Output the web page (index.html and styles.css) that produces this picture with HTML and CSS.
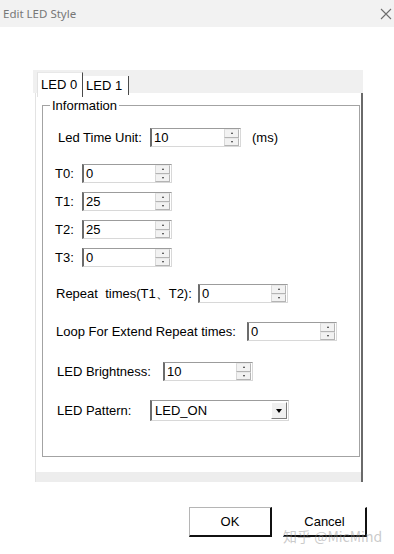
FILE: index.html
```html
<!DOCTYPE html>
<html lang="en">
<head>
    <meta charset="UTF-8">
    <meta name="viewport" content="width=device-width, initial-scale=1.0">
    <title>Edit LED Style</title>
    <link rel="stylesheet" href="styles.css">
</head>
<body>
    <div class="dialog">
        <div class="titlebar">
            <span class="title">Edit LED Style</span>
            <svg class="close" width="12" height="12" viewBox="0 0 12 12">
                <path d="M1 1 L11 11 M11 1 L1 11" stroke="#6e6e6e" stroke-width="1.1" fill="none"/>
            </svg>
        </div>

        <div class="content">
            <div class="tabstrip">
                <div class="tab active">LED 0</div>
                <div class="tab">LED 1</div>
            </div>
            <div class="panel">
                <fieldset class="group">
                    <legend>Information</legend>

                    <div class="row unit">
                        <span class="label">Led Time Unit:</span>
                        <div class="spin"><span class="val">10</span><span class="arrows"><i class="up"></i><i class="down"></i></span></div>
                        <span class="suffix">(ms)</span>
                    </div>

                    <div class="row t first">
                        <span class="label">T0:</span>
                        <div class="spin"><span class="val">0</span><span class="arrows"><i class="up"></i><i class="down"></i></span></div>
                    </div>
                    <div class="row t">
                        <span class="label">T1:</span>
                        <div class="spin"><span class="val">25</span><span class="arrows"><i class="up"></i><i class="down"></i></span></div>
                    </div>
                    <div class="row t">
                        <span class="label">T2:</span>
                        <div class="spin"><span class="val">25</span><span class="arrows"><i class="up"></i><i class="down"></i></span></div>
                    </div>
                    <div class="row t">
                        <span class="label">T3:</span>
                        <div class="spin"><span class="val">0</span><span class="arrows"><i class="up"></i><i class="down"></i></span></div>
                    </div>

                    <div class="row repeat">
                        <span class="label">Repeat&nbsp; times(T1、T2):</span>
                        <div class="spin"><span class="val">0</span><span class="arrows"><i class="up"></i><i class="down"></i></span></div>
                    </div>

                    <div class="row loop">
                        <span class="label">Loop For Extend Repeat times:</span>
                        <div class="spin"><span class="val">0</span><span class="arrows"><i class="up"></i><i class="down"></i></span></div>
                    </div>

                    <div class="row bright">
                        <span class="label">LED Brightness:</span>
                        <div class="spin"><span class="val">10</span><span class="arrows"><i class="up"></i><i class="down"></i></span></div>
                    </div>

                    <div class="row pattern">
                        <span class="label">LED Pattern:</span>
                        <div class="select"><span class="val">LED_ON</span><span class="drop"></span></div>
                    </div>
                </fieldset>
            </div>

            <div class="actions">
                <button class="btn ok">OK</button>
                <button class="btn cancel">Cancel</button>
            </div>
        </div>

        <span class="watermark">知乎 @MicMind</span>
    </div>
</body>
</html>
```

FILE: styles.css
```css
body {
    margin: 0;
    background-color: #ffffff;
    font-family: "Liberation Sans", Arial, sans-serif;
    font-size: 13px;
    color: #000000;
}

.dialog {
    position: relative;
    width: 394px;
    height: 554px;
    overflow: hidden;
}

.titlebar {
    height: 27px;
    background-color: #f2f2f2;
    display: flex;
    justify-content: space-between;
    align-items: center;
    padding: 0 2px 0 3px;
}

.title {
    font-family: "Noto Sans", "Open Sans", sans-serif;
    font-size: 11.5px;
    color: #777777;
}

.content {
    padding: 43px 0 0 33px;
}

/* tab control */

.tabstrip {
    width: 330px;
    height: 23px;
    background-color: #f0f0f0;
    display: flex;
    align-items: flex-start;
    padding: 2px 0 0 4px;
    box-sizing: border-box;
}

.tab {
    width: 46px;
    height: 19px;
    margin-top: 4px;
    box-sizing: border-box;
    background-color: #ffffff;
    border-right: 1px solid #4a4a4a;
    padding: 2px 0 0 3px;
    line-height: 15px;
}

.tab.active {
    position: relative;
    z-index: 1;
    height: 25px;
    margin-top: 0;
    border-left: 1px solid #e2e2e2;
    border-top: 1px solid #e8e8e8;
    padding: 4px 0 0 3px;
}

.panel {
    margin-left: 2px;
    width: 328px;
    height: 389px;
    box-sizing: border-box;
    border-left: 1px solid #e3e3e3;
    border-right: 2px solid #6a6a6a;
    background: linear-gradient(#ffffff 379px, #ededed 379px);
    padding: 5px 0 0 6px;
}

.group {
    width: 318px;
    box-sizing: border-box;
    margin: 0;
    border: 1px solid #a3a3a3;
    padding: 0 0 35px 0;
    min-width: 0;
}

.group legend {
    margin-left: 7px;
    padding: 0 2px;
    line-height: 15px;
}

/* form rows */

.row {
    display: flex;
    align-items: center;
    height: 19px;
    margin-top: 19px;
    padding-left: 14px;
}

.row .label {
    white-space: nowrap;
    flex-shrink: 0;
}

.row.unit {
    margin-top: 15px;
    padding-left: 15px;
}
.row.unit .label { width: 92px; }
.row.unit .spin { width: 91px; }

.suffix {
    margin-left: 11px;
}

.row.t {
    margin-top: 9px;
    padding-left: 12px;
}
.row.t.first { margin-top: 17px; }
.row.t .label { width: 27px; }

.row.repeat {
    margin-top: 17px;
    padding-left: 13px;
}
.row.repeat .label { width: 142px; }

.row.loop {
    padding-left: 13px;
}
.row.loop .label { width: 191px; }

.row.bright {
    margin-top: 21px;
}
.row.bright .label { width: 106px; }

.row.pattern {
    height: 21px;
}
.row.pattern .label { width: 93px; }

/* spin box */

.spin,
.select {
    display: flex;
    align-items: stretch;
    width: 90px;
    height: 19px;
    box-sizing: border-box;
    border-top: 1px solid #9c9c9c;
    border-left: 2px solid #6c6c6c;
    border-right: 1px solid #d8d8d8;
    border-bottom: 1px solid #d8d8d8;
    background-color: #ffffff;
}

.val {
    flex: 1;
    padding-left: 2px;
    line-height: 17px;
}

.arrows {
    width: 15px;
    display: flex;
    flex-direction: column;
    margin: 0 1px 0 0;
}

.arrows i {
    flex: 1;
    position: relative;
    background-color: #f2f2f2;
    border: 1px solid #b4b4b4;
    border-top-color: #e8e8e8;
    border-left-color: #d8d8d8;
}

.arrows i::after {
    content: "";
    position: absolute;
    left: 50%;
    top: 50%;
    margin-left: -1px;
    border-left: 1.5px solid transparent;
    border-right: 1.5px solid transparent;
}

.arrows .up::after {
    margin-top: -1px;
    border-bottom: 2px solid #333333;
}

.arrows .down::after {
    margin-top: -1px;
    border-top: 2px solid #333333;
}

/* drop-down */

.select {
    width: 139px;
    height: 21px;
}

.select .val {
    line-height: 19px;
    padding-left: 3px;
}

.drop {
    width: 16px;
    margin: 1px;
    position: relative;
    box-sizing: border-box;
    background-color: #f0f0f0;
    border-top: 1px solid #ffffff;
    border-left: 1px solid #ffffff;
    border-right: 1px solid #7a7a7a;
    border-bottom: 1px solid #7a7a7a;
}

.drop::after {
    content: "";
    position: absolute;
    left: 4px;
    top: 6px;
    border-left: 3.5px solid transparent;
    border-right: 3.5px solid transparent;
    border-top: 4px solid #000000;
}

/* buttons */

.actions {
    display: flex;
    gap: 11px;
    margin-top: 25px;
    padding-left: 156px;
}

.btn {
    width: 83px;
    height: 30px;
    font-family: "Liberation Sans", Arial, sans-serif;
    font-size: 13px;
    line-height: 13px;
    color: #000000;
    background-color: #ffffff;
    border-top: 1px solid #b5b5b5;
    border-left: 1px solid #b5b5b5;
    border-right: 2px solid #111111;
    border-bottom: 2px solid #111111;
    padding: 0;
}

.btn.cancel {
    width: 84px;
    border-top-color: #ffffff;
    border-left-color: #ffffff;
}

.watermark {
    position: absolute;
    left: 283px;
    top: 530px;
    font-family: "Noto Sans CJK SC", "Noto Sans", sans-serif;
    font-size: 14px;
    line-height: 12px;
    color: rgba(150, 150, 150, 0.5);
    white-space: nowrap;
}
```
